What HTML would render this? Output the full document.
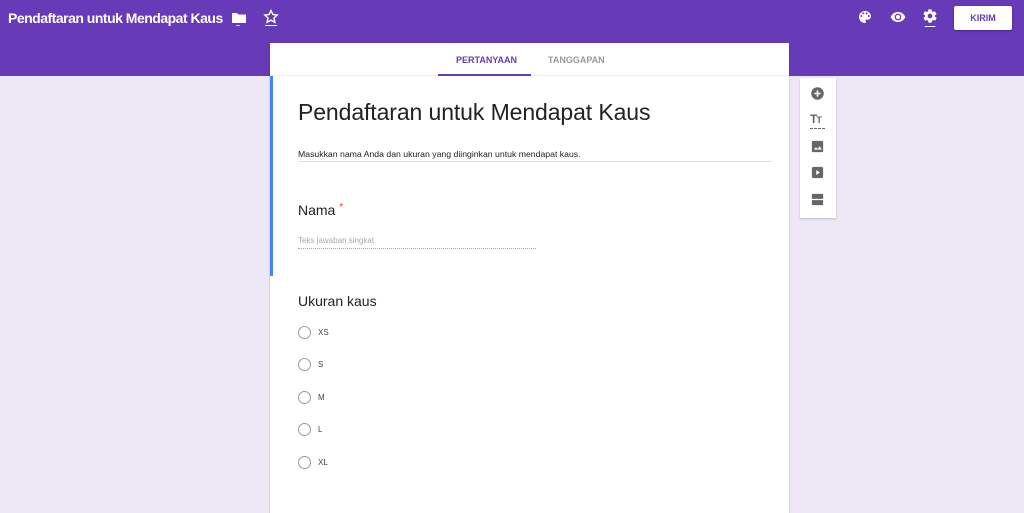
<!DOCTYPE html>
<html><head><meta charset="utf-8"><style>
*{margin:0;padding:0;box-sizing:border-box}
body{width:1024px;height:504px;overflow:hidden;background:#ede7f6;font-family:"Liberation Sans",Arial,sans-serif;position:relative}
.hdr{position:absolute;left:0;top:0;width:1024px;height:76px;background:#673ab7}
.title{position:absolute;left:8px;top:10px;color:#fff;font-size:14px;font-weight:bold;letter-spacing:-0.5px;white-space:nowrap}
.card{position:absolute;left:270px;top:43px;width:519px;height:470px;background:#fff;box-shadow:0 1px 2px rgba(0,0,0,.2)}
.tabs{position:absolute;left:0;top:0;width:519px;height:33px;border-bottom:1px solid #eee}
.tab{position:absolute;top:12px;font-size:9px;font-weight:bold}
.ul{position:absolute;left:168px;top:31px;width:93px;height:2px;background:#673ab7}
.blue{position:absolute;left:0;top:33px;width:3px;height:200px;background:#4285f4}
.abs{position:absolute}
.radio{position:absolute;left:28px;width:13px;height:13px;border:1.5px solid #999;border-radius:50%}
.rl{position:absolute;left:48px;font-size:8px;color:#444}
.tb{position:absolute;left:800px;top:78px;width:36px;height:140px;background:#fff;box-shadow:0 1px 2px rgba(0,0,0,.2)}
.btn{position:absolute;left:954px;top:6px;width:58px;height:24px;background:#fff;border-radius:2px;color:#673ab7;font-size:9px;font-weight:bold;text-align:center;line-height:24px;box-shadow:0 1px 2px rgba(0,0,0,.3)}
</style></head><body>
<div class="hdr">
<div class="title">Pendaftaran untuk Mendapat Kaus</div>
<svg class="abs" style="left:231px;top:10px" width="16" height="16" viewBox="0 0 16 16"><path d="M1 3h5l1.5 1.5H15V13H1z" fill="#fff"/><rect x="5" y="15" width="4" height="1" fill="#ccc"/></svg>
<svg class="abs" style="left:263px;top:9px" width="16" height="18" viewBox="0 0 16 18"><path d="M8 1.5l1.9 4 4.3.5-3.2 3 .9 4.3L8 11.2 4.1 13.3 5 9 1.8 6l4.3-.5z" fill="none" stroke="#fff" stroke-width="1.4"/><rect x="2" y="16" width="12" height="1" fill="#fff"/></svg>
<svg class="abs" style="left:857px;top:9px" width="16" height="16" viewBox="0 0 24 24"><path fill="#fff" d="M12 3a9 9 0 000 18c.8 0 1.5-.7 1.5-1.5 0-.4-.1-.7-.4-1-.2-.3-.4-.6-.4-1 0-.8.7-1.5 1.5-1.5H16c2.8 0 5-2.2 5-5 0-4.4-4-8-9-8zm-5.5 9a1.5 1.5 0 110-3 1.5 1.5 0 010 3zm3-4a1.5 1.5 0 110-3 1.5 1.5 0 010 3zm5 0a1.5 1.5 0 110-3 1.5 1.5 0 010 3zm3 4a1.5 1.5 0 110-3 1.5 1.5 0 010 3z"/></svg>
<svg class="abs" style="left:889px;top:9px" width="18" height="16" viewBox="0 0 24 24"><path fill="#fff" d="M12 4.5C7 4.5 2.7 7.6 1 12c1.7 4.4 6 7.5 11 7.5s9.3-3.1 11-7.5c-1.7-4.4-6-7.5-11-7.5zm0 12.5a5 5 0 110-10 5 5 0 010 10zm0-8a3 3 0 100 6 3 3 0 000-6z"/></svg>
<svg class="abs" style="left:922px;top:8px" width="16" height="20" viewBox="0 0 24 30"><path fill="#fff" d="M19.4 13c0-.3.1-.6.1-1s0-.7-.1-1l2.1-1.7c.2-.2.2-.4.1-.6l-2-3.5c-.1-.2-.4-.3-.6-.2l-2.5 1c-.5-.4-1.1-.7-1.7-1l-.4-2.6c0-.2-.2-.4-.5-.4h-4c-.2 0-.4.2-.5.4l-.4 2.6c-.6.3-1.200.6-1.7 1l-2.5-1c-.2-.1-.5 0-.6.2l-2 3.5c-.1.2-.1.5.1.6L4.6 11c0 .3-.1.7-.1 1s0 .7.1 1l-2.1 1.7c-.2.2-.2.4-.1.6l2 3.5c.1.2.4.3.6.2l2.5-1c.5.4 1.1.7 1.7 1l.4 2.6c0 .2.2.4.5.4h4c.2 0 .5-.2.5-.4l.4-2.6c.6-.3 1.2-.6 1.7-1l2.5 1c.2.1.5 0 .6-.2l2-3.5c.1-.2.1-.5-.1-.6zM12 15.5a3.5 3.5 0 110-7 3.5 3.5 0 010 7z"/><rect x="4" y="27" width="16" height="1.5" fill="#fff"/></svg>
<div class="btn">KIRIM</div>
</div>
<div class="card">
<div class="tabs">
<div class="tab" style="left:186px;color:#673ab7">PERTANYAAN</div>
<div class="tab" style="left:278px;color:#999">TANGGAPAN</div>
<div class="ul"></div>
</div>
<div class="blue"></div>
<div class="abs" style="left:28px;top:56px;font-size:23px;color:#222;letter-spacing:-0.1px">Pendaftaran untuk Mendapat Kaus</div>
<div class="abs" style="left:28px;top:106px;font-size:8.7px;color:#222">Masukkan nama Anda dan ukuran yang diinginkan untuk mendapat kaus.</div>
<div class="abs" style="left:28px;top:118px;width:474px;height:1px;background:#ddd"></div>
<div class="abs" style="left:28px;top:159px;font-size:14px;color:#222">Nama <span style="color:#db4437;font-size:10px;vertical-align:top">*</span></div>
<div class="abs" style="left:28px;top:193px;font-size:8px;color:#aaa">Teks jawaban singkat</div>
<div class="abs" style="left:28px;top:205px;width:238px;border-top:1px dotted #aaa"></div>
<div class="abs" style="left:28px;top:250px;font-size:14px;color:#222">Ukuran kaus</div>
<div class="radio" style="top:283px"></div><div class="rl" style="top:285px">XS</div>
<div class="radio" style="top:315px"></div><div class="rl" style="top:317px">S</div>
<div class="radio" style="top:348px"></div><div class="rl" style="top:350px">M</div>
<div class="radio" style="top:380px"></div><div class="rl" style="top:382px">L</div>
<div class="radio" style="top:413px"></div><div class="rl" style="top:415px">XL</div>
</div>
<div class="tb">
<svg class="abs" style="left:10px;top:8px" width="15" height="15" viewBox="0 0 24 24"><circle cx="12" cy="12" r="10" fill="#666"/><path d="M12 7v10M7 12h10" stroke="#fff" stroke-width="2.5"/></svg>
<div class="abs" style="left:10px;top:34px;font-size:12px;font-weight:bold;color:#666;letter-spacing:-1px">T<span style="font-size:9px">T</span></div>
<div class="abs" style="left:10px;top:50px;width:15px;border-top:1px dashed #666"></div>
<svg class="abs" style="left:10px;top:61px" width="15" height="15" viewBox="0 0 24 24"><rect x="3" y="3" width="18" height="18" rx="2" fill="#666"/><path d="M6 17l3.5-4 2.5 3 3.5-4.5L19 17z" fill="#fff"/></svg>
<svg class="abs" style="left:10px;top:87px" width="15" height="15" viewBox="0 0 24 24"><rect x="3" y="3" width="18" height="18" rx="3" fill="#666"/><path d="M10 8v8l6-4z" fill="#fff"/></svg>
<svg class="abs" style="left:10px;top:114px" width="15" height="15" viewBox="0 0 24 24"><rect x="3" y="3" width="18" height="8" fill="#666"/><rect x="3" y="13" width="18" height="8" fill="#666"/></svg>
</div>
</body></html>
